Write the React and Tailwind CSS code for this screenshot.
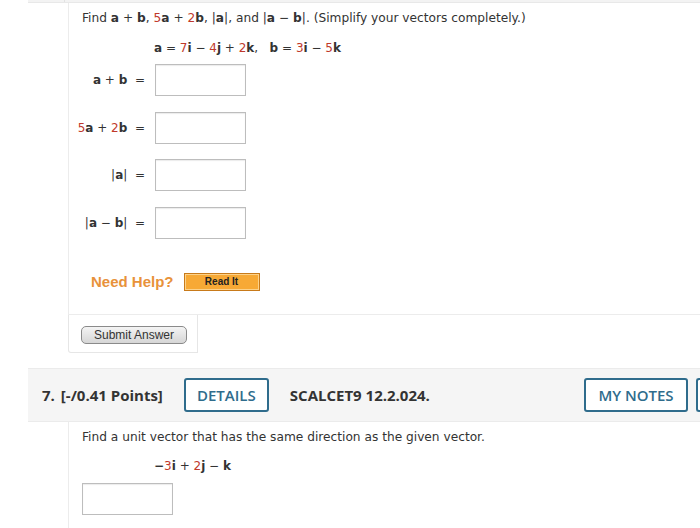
import React from 'react';

const verdana = { fontFamily: '"DejaVu Sans", Verdana, sans-serif' };

function R({ children }) {
  return <span className="text-[#c0392b]">{children}</span>;
}

function B({ children }) {
  return <b className="font-bold">{children}</b>;
}

function AnswerBox({ className = '' }) {
  return <div className={`w-[91px] h-[32px] border border-[#bdbdbd] bg-white shadow-[inset_0_1px_1px_rgba(0,0,0,0.08)] ${className}`} />;
}

function Row({ label }) {
  return (
    <div className="flex items-center h-[32px]">
      <div className="w-[73px] flex justify-end whitespace-nowrap pr-[10px] text-[12px] text-[#333]">{label}</div>
      <AnswerBox />
    </div>
  );
}

function OutlineButton({ children, className = '' }) {
  return (
    <div className={`h-[34px] border-2 border-[#2f6c8c] rounded-[3px] flex items-center justify-center text-[15px] font-semibold text-[#2f6c8c] bg-white ${className}`}>
      {children}
    </div>
  );
}

export default function App() {
  return (
    <div className="w-[700px] h-[528px] bg-white overflow-hidden text-[#222]">
      {/* bottom of previous header */}
      <div className="ml-[28px] h-[3px] bg-[#f3f3f3] border-b border-[#e8e8e8] flex">
        <div className="w-[37px] border-r border-[#e2e2e2]" />
      </div>

      {/* question 6 body */}
      <div className="ml-[68px] border-l border-b border-[#ececec] pl-[13px] h-[312px]" style={verdana}>
        <div className="pt-[6px] text-[12.2px] leading-[18px] text-[#333]">
          Find <B>a</B> + <B>b</B>, <R>5</R><B>a</B> + <R>2</R><B>b</B>, |<B>a</B>|, and |<B>a</B> − <B>b</B>|. (Simplify your vectors completely.)
        </div>
        <div className="mt-[12px] ml-[72px] text-[12px] leading-[18px] text-[#333] whitespace-pre">
          <B>a</B> = <R>7</R><B>i</B> − <R>4</R><B>j</B> + <R>2</R><B>k</B>,   <B>b</B> = <R>3</R><B>i</B> − <R>5</R><B>k</B>
        </div>
        <div className="mt-[7px] flex flex-col gap-[15.5px]">
          <Row label={<span><B>a</B> + <B>b</B> &nbsp;=</span>} />
          <Row label={<span><R>5</R><B>a</B> + <R>2</R><B>b</B> &nbsp;=</span>} />
          <Row label={<span>|<B>a</B>| &nbsp;=</span>} />
          <Row label={<span>|<B>a</B> − <B>b</B>| &nbsp;=</span>} />
        </div>
        <div className="mt-[32px] ml-[9px] flex items-center gap-[10px]" style={{ fontFamily: '"Liberation Sans", Arial, sans-serif' }}>
          <span className="text-[15px] font-bold text-[#e8923a]">Need Help?</span>
          <div className="w-[76px] h-[18px] bg-[#f7a935] border border-[#c87a1a] shadow-[inset_0_0_0_1px_#fcd28a] flex items-center justify-center text-[10px] font-bold text-[#222]">
            Read It
          </div>
        </div>
      </div>

      {/* submit area */}
      <div className="ml-[68px] w-[130px] h-[38px] border-l border-r border-b border-[#e6e6e6] rounded-bl-[3px] pl-[12px] pt-[11px]">
        <div className="w-[106px] h-[18px] rounded-[5px] border border-[#8a8a8a] bg-gradient-to-b from-[#f4f4f4] to-[#d6d6d6] flex items-center justify-center text-[12px] text-[#333]" style={{ fontFamily: '"Liberation Sans", Arial, sans-serif' }}>
          Submit Answer
        </div>
      </div>

      {/* question 7 header */}
      <div className="mt-[15px] ml-[28px] h-[54px] bg-[#f5f5f5] border-t border-b border-[#ebebeb] flex items-center" style={{ fontFamily: '"Open Sans", sans-serif' }}>
        <span className="ml-[14px] text-[15px] font-bold text-[#333]">7.</span>
        <span className="ml-[6px] text-[15px] font-bold text-[#333]">[-/0.41 Points]</span>
        <OutlineButton className="ml-[21px] w-[85px]">DETAILS</OutlineButton>
        <span className="ml-[21px] text-[15px] font-bold text-[#333]">SCALCET9 12.2.024.</span>
        <OutlineButton className="ml-auto w-[104px]">MY NOTES</OutlineButton>
        <div className="ml-[8px] w-[4px] h-[34px] border-2 border-r-0 border-[#2f6c8c] rounded-l-[3px] bg-white" />
      </div>

      {/* question 7 body */}
      <div className="ml-[68px] border-l border-[#ececec] pl-[13px] h-[120px]" style={verdana}>
        <div className="pt-[6px] text-[12.2px] leading-[18px] text-[#333]">
          Find a unit vector that has the same direction as the given vector.
        </div>
        <div className="mt-[11px] ml-[72px] text-[12px] leading-[18px] text-[#333]">
          <B>−</B><R>3</R><B>i</B> + <R>2</R><B>j</B> − <B>k</B>
        </div>
        <AnswerBox className="mt-[8px]" />
      </div>
    </div>
  );
}
